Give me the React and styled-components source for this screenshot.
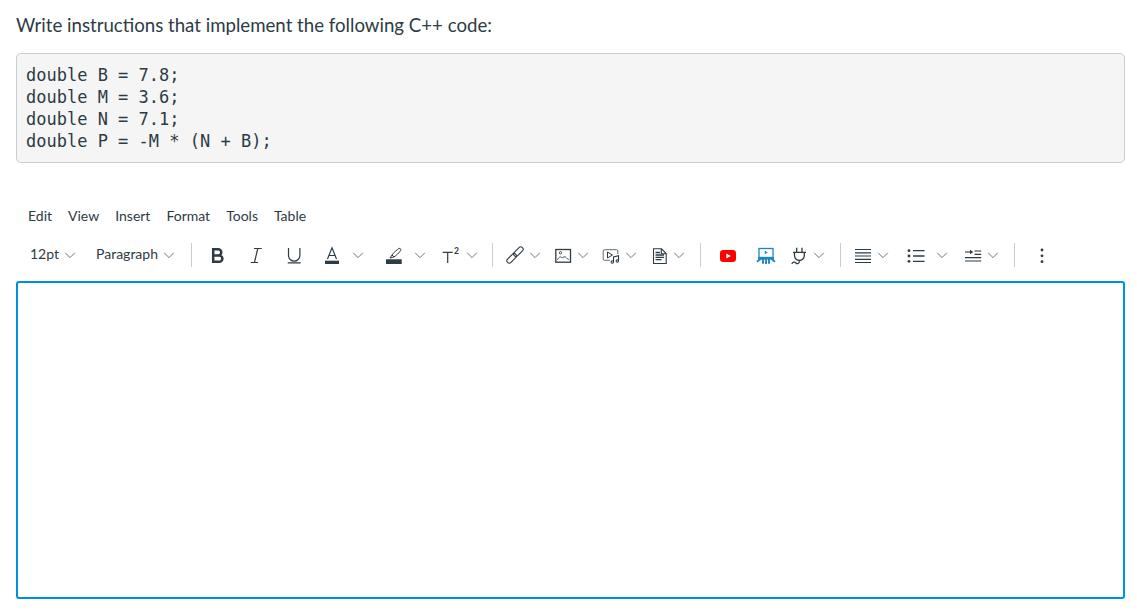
import React from "react";
import styled, { createGlobalStyle } from "styled-components";

const Global = createGlobalStyle`
  html, body {
    margin: 0;
    padding: 0;
    background: #fff;
  }
  body {
    font-family: Lato, "Noto Sans", sans-serif;
    color: #2d3b45;
  }
`;

const Page = styled.div`
  width: 1137px;
  height: 612px;
  box-sizing: border-box;
  padding: 13px 12px 0 16px;
  overflow: hidden;
`;

const Question = styled.p`
  margin: 0;
  font-size: 18.65px;
  line-height: 24px;
  color: #2d3b45;
`;

const CodeBlock = styled.pre`
  margin: 16px 0 0;
  height: 110px;
  box-sizing: border-box;
  padding: 9.5px 9px 0;
  background: #f5f5f5;
  border: 1px solid #c7cdd1;
  border-radius: 5px;
  font-family: "DejaVu Sans Mono", "Liberation Mono", monospace;
  font-size: 17px;
  line-height: 22.33px;
  color: #2d3b45;
`;

const MenuBar = styled.div`
  display: flex;
  align-items: center;
  gap: 16px;
  height: 20px;
  margin: 42px 0 0 12px;
  font-size: 14px;
  color: #2d3b45;
`;

const ToolBar = styled.div`
  display: flex;
  align-items: center;
  height: 30px;
  margin: 15px 0 11px 14px;
`;

const TextTool = styled.div`
  display: flex;
  align-items: center;
  gap: 5px;
  margin-left: ${(p) => p.$ml || 0}px;
  font-size: 14px;
  color: #2d3b45;
`;

const TextLabel = styled.span`
  padding-bottom: 3px;
`;

const Tool = styled.div`
  display: flex;
  align-items: center;
  flex: none;
  gap: ${(p) => p.$gap || 0}px;
  margin-left: ${(p) => p.$ml || 0}px;
  color: #2d3b45;
`;

const Divider = styled.span`
  flex: none;
  width: 1px;
  height: 24px;
  background: #c7cdd1;
  margin-left: ${(p) => p.$ml || 0}px;
`;

const Editor = styled.div`
  height: 318px;
  box-sizing: border-box;
  border: 2px solid #008ee2;
  border-radius: 3px;
`;

const Chevron = () => (
  <svg width="12" height="12" viewBox="0 0 12 12" fill="none" stroke="#6b7780" strokeWidth="1">
    <path d="M1.2 3.8l4.8 4.8 4.8-4.8" />
  </svg>
);

const Icon = ({ children }) => (
  <svg width="20" height="20" viewBox="0 0 20 20" fill="none" stroke="currentColor" strokeWidth="1">
    {children}
  </svg>
);

const Bold = () => (
  <Icon>
    <path d="M6.2 4.2h5a3.1 3.1 0 0 1 0 6.2h-5zM6.2 10.4h6a3.2 3.2 0 0 1 0 6.4h-6z" strokeWidth="2.5" />
  </Icon>
);
const Italic = () => (
  <Icon>
    <path d="M8 3.5h7.7M4.700 17.500h7.300M11.800 3.500L8.400 17.500" strokeWidth="1.2" />
  </Icon>
);
const Underline = () => (
  <Icon>
    <path d="M5.500 3v7.500a5.700 5.700 0 0 0 11.400 0V3M4.700 17.800h13" strokeWidth="1.2" />
  </Icon>
);
const TextColor = () => (
  <Icon>
    <path d="M5.500 14L10 2.800 14.500 14M7 10.500h6" strokeWidth="1.2" />
    <rect x="3" y="15.700" width="14" height="3.300" fill="currentColor" stroke="none" />
  </Icon>
);
const Highlight = () => (
  <Icon>
    <path d="M8 10c1-2 5.500-5.500 7-6.500 1.200-.6 2.300.8 1.700 1.900-1.200 2-5 5.800-6.700 6.500zM8 10l2 1.900-4 1.100z" strokeWidth="1" />
    <rect x="2" y="14.300" width="15.700" height="4.700" fill="currentColor" stroke="none" />
  </Icon>
);
const Superscript = () => (
  <svg width="22" height="20" viewBox="0 0 22 20" fill="none">
    <path d="M2.700 7.300h10M7.700 7.300V18" stroke="currentColor" strokeWidth="1.200" />
    <text x="14" y="9" fontFamily="Lato, sans-serif" fontSize="8.500" fontWeight="700" fill="currentColor">
      2
    </text>
  </svg>
);
const LinkIcon = () => (
  <Icon>
    <g transform="rotate(-45 10 10)" strokeWidth="1.100">
      <rect x="-0.500" y="7.600" width="11.500" height="4.800" rx="2.400" />
      <rect x="9" y="7.600" width="11.500" height="4.800" rx="2.400" />
    </g>
  </Icon>
);
const ImageIcon = () => (
  <Icon>
    <rect x="2.800" y="4.500" width="14.700" height="12.700" strokeWidth="1.300" />
    <circle cx="7.500" cy="7.800" r="1.200" strokeWidth="0.900" />
    <path d="M4.500 14.800c1.500-3.200 3.200-3.600 4.800-1.700 1-1.600 2.800-1.900 4-.4.700.8 1.300 1.400 2.500 1.800" strokeWidth="0.900" />
  </Icon>
);
const MediaIcon = () => (
  <Icon>
    <path d="M9 15.300H3.500a1.300 1.300 0 0 1-1.300-1.300V6a1.300 1.300 0 0 1 1.300-1.300h12a1.300 1.300 0 0 1 1.300 1.300v3" stroke="#5f6b74" />
    <path d="M6.500 7l5 3-5 3z" />
    <path d="M12.500 17V12l5-1.200v5.200" strokeWidth="1.100" />
    <circle cx="11.300" cy="17" r="1.200" strokeWidth="1.100" />
    <circle cx="16.300" cy="16" r="1.200" strokeWidth="1.100" />
  </Icon>
);
const DocumentIcon = () => (
  <Icon>
    <path d="M4.500 3.800h8l4.700 4.700v10H4.500zM12.300 3.800v4.900h4.900" strokeWidth="1.100" />
    <path d="M6.500 7.500h4.500M6.500 10h8.500M6.500 12.300h8.500M6.500 14.600h6" strokeWidth="1.300" />
  </Icon>
);
const YouTube = () => (
  <svg width="20" height="20" viewBox="0 0 20 20">
    <rect x="2" y="5" width="16" height="12" rx="3.200" fill="#f00" />
    <path d="M8.300 8.500l4.600 2.500-4.600 2.500z" fill="#fff" />
  </svg>
);
const Presenter = () => (
  <svg width="20" height="20" viewBox="0 0 20 20" fill="none">
    <rect x="3" y="3.500" width="14" height="9" fill="#fff" stroke="#1d86c8" strokeWidth="1.300" />
    <path d="M8.800 5.800l3 1.700-3 1.700z" fill="#1d86c8" />
    <rect x="2" y="12" width="16" height="2.600" fill="#1d86c8" />
    <path d="M5 13.500L1 16.800M15 13.500l4 3.300" stroke="#1d86c8" strokeWidth="2" />
    <path d="M7 14v4.800M10 14v5M13 14v4.800" stroke="#1d86c8" strokeWidth="1.900" />
  </svg>
);
const Plug = () => (
  <Icon>
    <path d="M8.700 2.800v4.500M14 2.800v4.500M5 7.300h13M6.500 7.300v3.300a4.900 4.900 0 0 0 9.800 0V7.300M11.400 15.400v1" strokeWidth="1.300" />
    <path d="M11.400 16.200c0 2.300-2.200 3.200-3.500 1.800-1.100-1.300-3.600-1.300-4 1" strokeWidth="1.200" />
  </Icon>
);
const AlignLeft = () => (
  <Icon>
    <path d="M2 4.500h16M2 7.800h16M2 11h16M2 14.300h16M2 17.500h16" strokeWidth="1.200" />
  </Icon>
);
const ListIcon = () => (
  <Icon>
    <circle cx="3" cy="5.700" r="1.400" fill="currentColor" stroke="none" />
    <circle cx="3" cy="11" r="1.400" fill="currentColor" stroke="none" />
    <circle cx="3" cy="16.300" r="1.400" fill="currentColor" stroke="none" />
    <path d="M7 5.700h11.500M7 11h11.500M7 16.300h11.500" strokeWidth="1.300" />
  </Icon>
);
const Indent = () => (
  <Icon>
    <path d="M2 7h5" strokeWidth="1.100" />
    <path d="M7 4.800l3.300 2.200L7 9.200z" fill="currentColor" stroke="none" />
    <path d="M11.500 6h6.700M11.500 9.300h6.700M2 12.700h16.200M2 16h16.200" strokeWidth="1.200" />
  </Icon>
);
const Dots = () => (
  <svg width="20" height="20" viewBox="0 0 20 20" fill="currentColor">
    <circle cx="10" cy="5" r="1.400" />
    <circle cx="10" cy="10.800" r="1.400" />
    <circle cx="10" cy="16.700" r="1.400" />
  </svg>
);

const menus = ["Edit", "View", "Insert", "Format", "Tools", "Table"];

const code = `double B = 7.8;
double M = 3.6;
double N = 7.1;
double P = -M * (N + B);`;

export default function App() {
  return (
    <Page>
      <Global />
      <Question>Write instructions that implement the following C++ code:</Question>
      <CodeBlock>{code}</CodeBlock>
      <MenuBar>
        {menus.map((m) => (
          <span key={m}>{m}</span>
        ))}
      </MenuBar>
      <ToolBar>
        <TextTool>
          <TextLabel>12pt</TextLabel> <Chevron />
        </TextTool>
        <TextTool $ml={20}>
          <TextLabel>Paragraph</TextLabel> <Chevron />
        </TextTool>
        <Divider $ml={16} />
        <Tool $ml={15}><Bold /></Tool>
        <Tool $ml={19}><Italic /></Tool>
        <Tool $ml={17}><Underline /></Tool>
        <Tool $ml={19} $gap={10}><TextColor /><Chevron /></Tool>
        <Tool $ml={20} $gap={10}><Highlight /><Chevron /></Tool>
        <Tool $ml={14} $gap={4}><Superscript /><Chevron /></Tool>
        <Divider $ml={14} />
        <Tool $ml={12} $gap={4}><LinkIcon /><Chevron /></Tool>
        <Tool $ml={12} $gap={4}><ImageIcon /><Chevron /></Tool>
        <Tool $ml={12} $gap={4}><MediaIcon /><Chevron /></Tool>
        <Tool $ml={12} $gap={4}><DocumentIcon /><Chevron /></Tool>
        <Divider $ml={15} />
        <Tool $ml={17}><YouTube /></Tool>
        <Tool $ml={18}><Presenter /></Tool>
        <Tool $ml={12} $gap={5}><Plug /><Chevron /></Tool>
        <Divider $ml={15} />
        <Tool $ml={12} $gap={4}><AlignLeft /><Chevron /></Tool>
        <Tool $ml={17} $gap={10}><ListIcon /><Chevron /></Tool>
        <Tool $ml={15} $gap={4}><Indent /><Chevron /></Tool>
        <Divider $ml={15} />
        <Tool $ml={17}><Dots /></Tool>
      </ToolBar>
      <Editor />
    </Page>
  );
}
